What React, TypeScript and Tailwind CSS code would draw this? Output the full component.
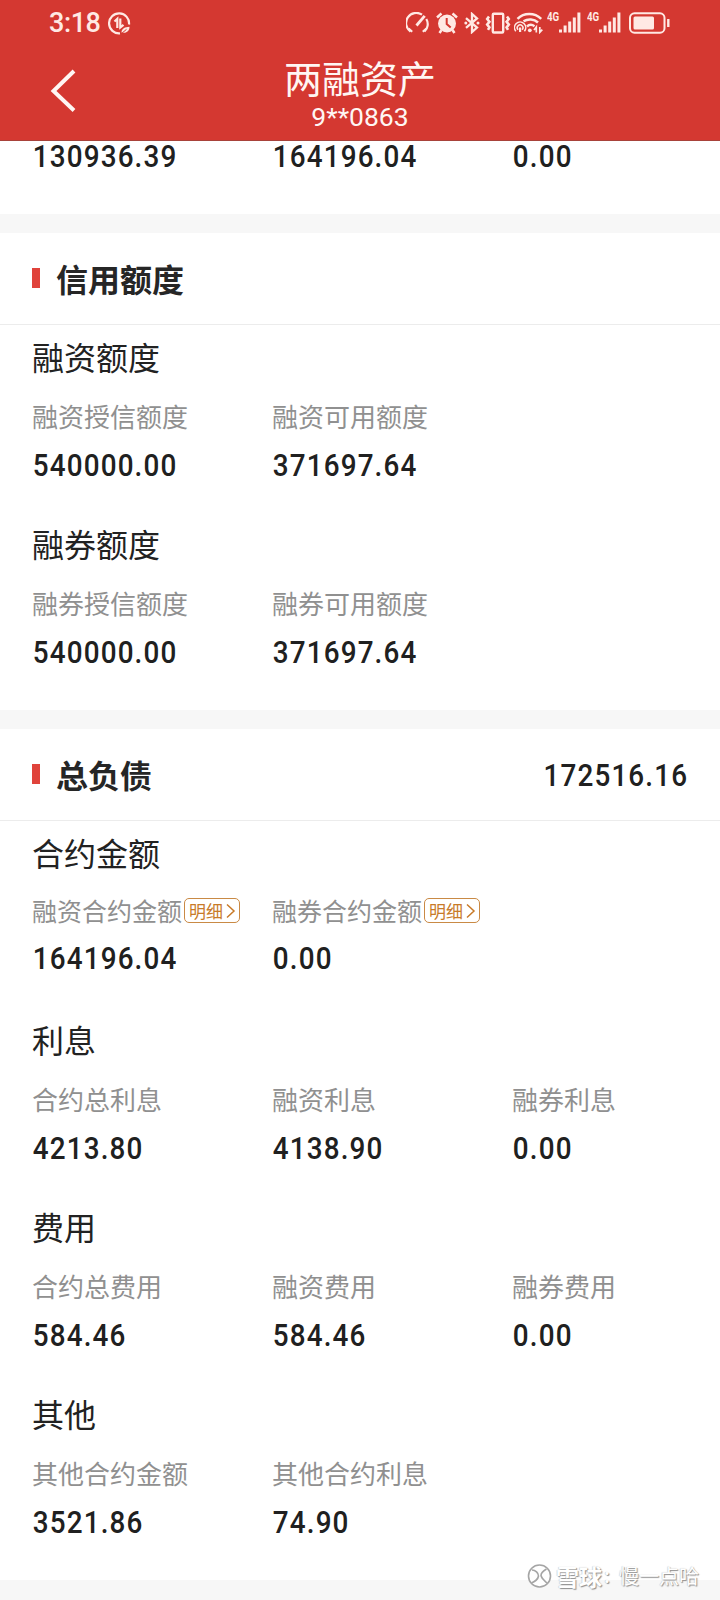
import type { ReactNode } from 'react';
import clsx from 'clsx';

type Cell = { label: string; value: string; detail?: boolean };
type Group = { title: string; cells: Cell[] };

const creditGroups: Group[] = [
  {
    title: '融资额度',
    cells: [
      { label: '融资授信额度', value: '540000.00' },
      { label: '融资可用额度', value: '371697.64' },
    ],
  },
  {
    title: '融券额度',
    cells: [
      { label: '融券授信额度', value: '540000.00' },
      { label: '融券可用额度', value: '371697.64' },
    ],
  },
];

const debtGroups: Group[] = [
  {
    title: '合约金额',
    cells: [
      { label: '融资合约金额', value: '164196.04', detail: true },
      { label: '融券合约金额', value: '0.00', detail: true },
    ],
  },
  {
    title: '利息',
    cells: [
      { label: '合约总利息', value: '4213.80' },
      { label: '融资利息', value: '4138.90' },
      { label: '融券利息', value: '0.00' },
    ],
  },
  {
    title: '费用',
    cells: [
      { label: '合约总费用', value: '584.46' },
      { label: '融资费用', value: '584.46' },
      { label: '融券费用', value: '0.00' },
    ],
  },
  {
    title: '其他',
    cells: [
      { label: '其他合约金额', value: '3521.86' },
      { label: '其他合约利息', value: '74.90' },
    ],
  },
];

// Roboto squeezed a little to get a DIN-like figure
function Amount({ children, right }: { children: ReactNode; right?: boolean }) {
  return (
    <span
      className={clsx(
        "inline-block scale-x-[0.87] font-['Roboto',sans-serif] text-[32px] leading-none font-medium tracking-[1.3px] text-[#202020]",
        right ? 'origin-right' : 'origin-left pl-px',
      )}
    >
      {children}
    </span>
  );
}

function Signal() {
  return (
    <div className="flex h-[24px] items-start">
      <span className="w-[12px] origin-left scale-x-[0.72] font-['Roboto',sans-serif] text-[13.5px] leading-[11px] font-bold">4G</span>
      <svg width="22" height="24" viewBox="0 0 22 24" fill="currentColor">
        <rect x="0" y="18.5" width="3" height="3" />
        <rect x="4.6" y="14.5" width="3" height="7" />
        <rect x="9.2" y="10.5" width="3" height="11" />
        <rect x="13.8" y="6.5" width="3" height="15" />
        <rect x="18.4" y="1.5" width="3" height="20" />
      </svg>
    </div>
  );
}

function StatusBar() {
  return (
    <div className="flex h-[46px] items-center pl-[49px] text-[#ffe9e4]">
      <span className="w-[59px] font-['Roboto',sans-serif] text-[27px] leading-none font-medium tracking-[-0.4px]">3:18</span>
      <svg width="23" height="23" viewBox="0 0 23 23" fill="none" stroke="currentColor" strokeWidth="2.2">
        <path d="M21 12.5A10 10 0 1 0 12 21.3" />
        <path d="M6.5 9.5L9.3 6.8V16M12.3 6.5V15.5L15.5 12.8" />
        <path d="M13.5 20.5C13.5 16.5 17 15 21.5 14.8C21.5 19 18.5 21.8 13.5 20.5Z" fill="currentColor" stroke="none" />
        <path d="M13 22L18.5 17.3" stroke="#d43831" strokeWidth="1" />
      </svg>
      <div className="ml-[275px] flex items-center">
        <svg width="23" height="22" viewBox="0 0 23 22" fill="none" stroke="currentColor" strokeWidth="2.2">
          <path d="M4.5 19.5A10 10 0 0 1 16 2.7M20.3 7A10 10 0 0 1 18.5 19.5" />
          <path d="M2.6 16.5L6.2 19.8M20.4 16.5L16.8 19.8" />
          <path d="M10.5 13.5L18.7 3.8" strokeWidth="2.8" />
        </svg>
        <svg className="ml-[7px]" width="22" height="22" viewBox="0 0 22 22" fill="none" stroke="currentColor" strokeWidth="2">
          <circle cx="11" cy="11.5" r="9" fill="currentColor" stroke="none" />
          <path d="M1 5.5L5.5 1.5M16.5 1.5L21 5.5M5.5 18L3.5 21M16.5 18L18.5 21" strokeWidth="2.5" />
          <path d="M10.7 6V12L14.7 15.5" stroke="#d43831" strokeWidth="2" />
        </svg>
        <svg className="ml-[6px]" width="16" height="22" viewBox="0 0 16 22" fill="none" stroke="currentColor" strokeWidth="2.3">
          <path d="M2 6.2L13 15.5L8 20V2L13 6.5L2 15.8" />
          <circle cx="1.8" cy="11" r="1.5" fill="currentColor" stroke="none" />
          <circle cx="14" cy="11" r="1.5" fill="currentColor" stroke="none" />
        </svg>
        <svg className="ml-[5px]" width="26" height="22" viewBox="0 0 26 22" fill="none" stroke="currentColor" strokeWidth="2.4">
          <rect x="7.8" y="1.7" width="10.4" height="18.8" rx="1" />
          <path d="M4 4.5L2.2 7L4.4 9.8L2.2 12.6L4.4 15.4L3 17.8M22 4.5L23.8 7L21.6 9.8L23.8 12.6L21.6 15.4L23 17.8" strokeWidth="2.6" />
        </svg>
        <svg className="ml-[3px]" width="29" height="22" viewBox="0 0 29 22" fill="none" stroke="currentColor" strokeWidth="2.5">
          <path d="M3.5 6.8C10 0.4 20.5 0.4 27.2 6.8" />
          <path d="M9.5 9.3C14 6.4 20 6.8 24 10.5" />
          <path d="M1.8 19.2A5.6 5.6 0 1 1 10.4 19.2M4.1 17.7A2.8 2.8 0 1 1 8.1 17.7" strokeWidth="1.6" />
          <path d="M6.1 15.5V20" strokeWidth="2.2" />
          <path d="M13 14.5C15.5 12.2 18 12.4 20.5 14.2" />
          <circle cx="15.8" cy="18.3" r="1.9" fill="currentColor" stroke="none" />
          <path d="M22.3 20.5V15L20 18M25.8 15V20.3L28.3 17.6" strokeWidth="1.7" />
        </svg>
        <div className="ml-[4px] flex gap-[6px]">
          <Signal />
          <Signal />
        </div>
        <svg className="ml-[8px]" width="42" height="22" viewBox="0 0 42 22" fill="none" stroke="currentColor" strokeWidth="2">
          <rect x="1" y="1.3" width="34.5" height="19.4" rx="4.5" />
          <rect x="4.5" y="4.5" width="20.5" height="13" rx="1.5" fill="currentColor" stroke="none" />
          <path d="M39.3 7V15" strokeWidth="2.4" />
        </svg>
      </div>
    </div>
  );
}

function Header() {
  return (
    <header className="h-[141px] shrink-0 border-b border-[#a8423a] bg-[#d43831] text-[#fff6f3]">
      <StatusBar />
      <div className="grid grid-cols-[1fr_auto_1fr] items-start">
        <svg className="mt-[23px] ml-[50px]" width="27" height="44" viewBox="0 0 27 44" fill="none" stroke="currentColor" strokeWidth="4">
          <path d="M24 2L3.5 22L24 41.5" />
        </svg>
        <div className="flex flex-col items-center pt-[12px]">
          <h1 className="text-[38px] leading-[38px]">两融资产</h1>
          <p className="mt-[9px] font-['Roboto',sans-serif] text-[26.5px] leading-[24px]">9**0863</p>
        </div>
      </div>
    </header>
  );
}

function DetailTag() {
  return (
    <span className="ml-[2px] flex h-[25px] w-[56px] shrink-0 items-center rounded-[5px] border border-[#c98a45] pl-[4px] text-[17px] leading-none whitespace-nowrap text-[#c87a28]">
      明细
      <svg className="ml-[2px]" width="11" height="16" viewBox="0 0 11 16" fill="none" stroke="currentColor" strokeWidth="1.5">
        <path d="M2 1.5L9 8L2 14.5" />
      </svg>
    </span>
  );
}

function SectionTitle({ title, total }: { title: string; total?: string }) {
  return (
    <div className="flex h-[92px] items-center border-b border-[#ececec] pr-[32px] pl-[32px]">
      <span className="mb-[2px] h-[20px] w-[8px] bg-[#e0433b]" />
      <h2 className="mb-[2px] ml-[16px] text-[32px] leading-none font-bold text-[#262626]">{title}</h2>
      {total && (
        <span className="ml-auto">
          <Amount right>{total}</Amount>
        </span>
      )}
    </div>
  );
}

function GroupBlock({ group }: { group: Group }) {
  return (
    <div className="h-[187px] pl-[32px]">
      <h3 className="flex h-[66px] items-center pb-[4px] text-[32px] leading-none text-[#222]">{group.title}</h3>
      <div className="grid grid-cols-[240px_240px_1fr]">
        {group.cells.map((cell) => (
          <div key={cell.label}>
            <div
              className={clsx(
                'flex items-center pb-[2px] leading-none whitespace-nowrap text-[#909090]',
                cell.detail ? 'h-[49px] text-[25px]' : 'h-[52px] text-[26px]',
              )}
            >
              {cell.label}
              {cell.detail && <DetailTag />}
            </div>
            <div className="flex h-[43px] items-center">
              <Amount>{cell.value}</Amount>
            </div>
          </div>
        ))}
      </div>
    </div>
  );
}

function Section({ title, total, groups }: { title: string; total?: string; groups: Group[] }) {
  return (
    <section className="bg-white pb-[11px]">
      <SectionTitle title={title} total={total} />
      {groups.map((group) => (
        <GroupBlock key={group.title} group={group} />
      ))}
    </section>
  );
}

function Watermark() {
  return (
    <div className="absolute top-[1563px] left-[527px] flex items-center text-white [text-shadow:1px_1px_1px_#8e8e8e,-0.5px_-0.5px_1px_#c4c4c4]">
      <svg width="25" height="26" viewBox="0 0 25 26" fill="none" strokeWidth="1.6" stroke="#a5a5a5">
        <circle cx="12.5" cy="13" r="11" fill="#fff" />
        <path d="M5 7C8.5 7 11.5 10 11.5 13C11 16 8 18.5 4.5 20M19.5 6C16 8 14 10.5 14 12.5C14.5 15.5 17.5 17.5 20.5 20.5" />
      </svg>
      <span className="ml-[4px] text-[23px] leading-[26px] font-bold">雪球</span>
      <span className="ml-px w-[16px] text-[16px] leading-[26px] font-bold">：</span>
      <span className="text-[20px] leading-[26px]">慢一点哈</span>
    </div>
  );
}

export default function App() {
  return (
    <div className="relative flex h-[1600px] w-[720px] flex-col overflow-hidden bg-[#f7f7f7] font-['Noto_Sans_CJK_SC',sans-serif]">
      <Header />
      <div className="h-[73px] shrink-0 bg-white">
        <div className="-mt-px grid grid-cols-[240px_240px_1fr] pl-[32px] leading-none">
          <Amount>130936.39</Amount>
          <Amount>164196.04</Amount>
          <Amount>0.00</Amount>
        </div>
      </div>
      <main className="mt-[19px] flex flex-col gap-[19px]">
        <Section title="信用额度" groups={creditGroups} />
        <Section title="总负债" total="172516.16" groups={debtGroups} />
      </main>
      <Watermark />
    </div>
  );
}
